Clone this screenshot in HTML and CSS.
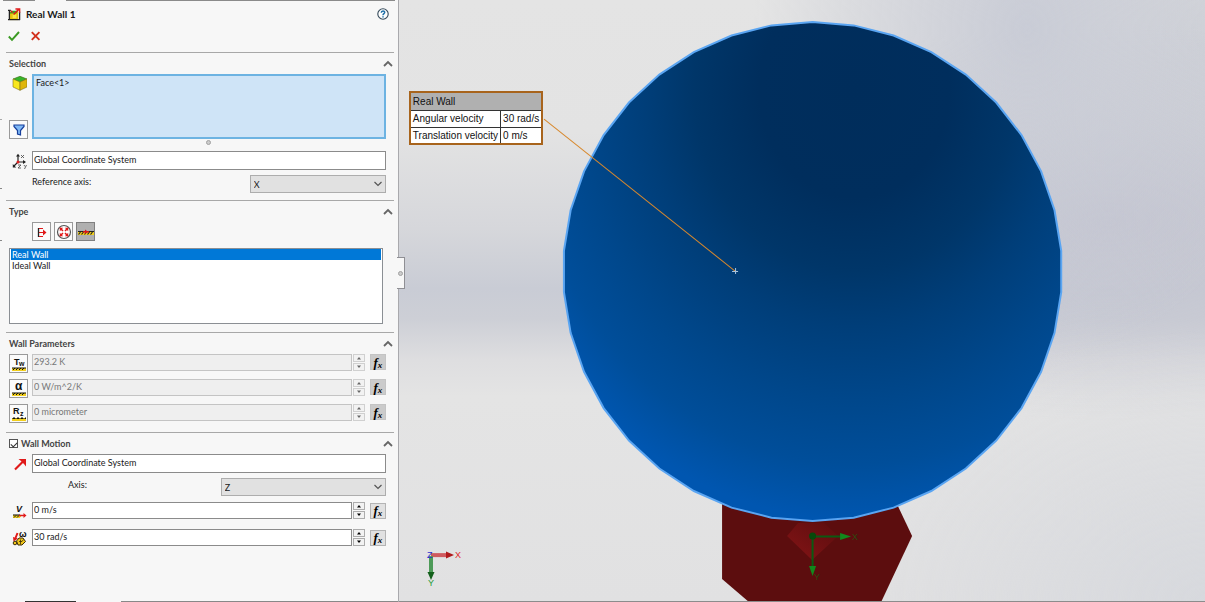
FILE: index.html
```html
<!DOCTYPE html>
<html lang="en">
<head>
  <meta charset="UTF-8" />
  <meta name="viewport" content="width=device-width, initial-scale=1.0"/>
  <title>Real Wall 1</title>
  <link rel="stylesheet" href="styles.css">
</head>
<body>

  <!-- shared symbols -->
  <svg class="symbols" aria-hidden="true">
    <symbol id="chevron-up" viewBox="0 0 10 8"><path d="M1 6 5 2 9 6" fill="none" stroke="#666" stroke-width="1.8"/></symbol>
    <symbol id="chevron-down" viewBox="0 0 10 8"><path d="M1.5 2 5 5.5 8.5 2" fill="none" stroke="#555" stroke-width="1.2"/></symbol>
    <symbol id="tri-up" viewBox="0 0 6 4"><path d="M1 3.5 3 1 5 3.5z" fill="currentColor"/></symbol>
    <symbol id="tri-down" viewBox="0 0 6 4"><path d="M1 .5 3 3 5 .5z" fill="currentColor"/></symbol>
    <symbol id="ground" viewBox="0 0 14 4">
      <rect y="1" width="14" height="3" fill="#f2cf1d"/>
      <path d="M0 1h14M1 3l2-2M4 3l2-2M7 3l2-2M10 3l2-2" stroke="#111" stroke-width="1" fill="none"/>
    </symbol>
  </svg>

  <div class="app">
    <aside class="panel">
      <header class="panel-header">
        <div class="title-row">
          <svg class="title-icon" viewBox="0 0 14 14">
            <path d="M2 4h9v9H2z" fill="#e6c60e"/>
            <path d="M2 5 4 3h7L9 6H2z" fill="#35a81f"/>
            <path d="M5 7h4v4H5z" fill="#f7e64a"/>
            <path d="M1.500 2v11M0 2.500h3M12.500 4v9M0 12.500h13" stroke="#222" stroke-width="1.400" fill="none"/>
            <path d="M6 7 12 1M8 1.200h4.500V5" stroke="#e01b1b" stroke-width="1.600" fill="none"/>
            <path d="M3 3l2 2" stroke="#e01b1b" stroke-width="1.400"/>
          </svg>
          <h1>Real Wall 1</h1>
          <button class="plain help" type="button" aria-label="Help">
            <svg viewBox="0 0 12 12">
              <circle cx="6" cy="6" r="5.200" fill="#fff" stroke="#34495a" stroke-width="1.100"/>
              <path d="M4.300 4.700C4.300 2.300 7.800 2.400 7.700 4.500 7.600 5.700 6 5.700 6 7.300M6 8.200v1.300" fill="none" stroke="#2070a8" stroke-width="1.500"/>
            </svg>
          </button>
        </div>
        <div class="action-row">
          <button class="plain" type="button" aria-label="OK">
            <svg viewBox="0 0 12 12"><path d="M.8 6.500 4 9.800 11 2" fill="none" stroke="#3a9a22" stroke-width="1.900"/></svg>
          </button>
          <button class="plain" type="button" aria-label="Cancel">
            <svg viewBox="0 0 12 12"><path d="M1.800 2.200 9.400 9.800M9.400 2.200 1.800 9.800" fill="none" stroke="#d2301c" stroke-width="1.900"/></svg>
          </button>
        </div>
      </header>

      <section class="group selection">
        <div class="group-head">
          <h2>Selection</h2>
          <button class="plain toggle" type="button" aria-label="Collapse Selection"><svg><use href="#chevron-up"/></svg></button>
        </div>
        <div class="row">
          <div class="side-icons">
            <svg class="icon" viewBox="0 0 16 16">
              <path d="M9 1.300 16 4 9 7 2 4z" fill="#35b52a" stroke="#3a6a10" stroke-width=".6"/>
              <path d="M2 4 9 7v8.300L2 12z" fill="#f8e71c" stroke="#80701a" stroke-width=".6"/>
              <path d="M16 4 9 7v8.300L16 12z" fill="#dfb60c" stroke="#80701a" stroke-width=".6"/>
            </svg>
            <button class="icon-btn" type="button" aria-label="Filter">
              <svg viewBox="0 0 16 16"><path d="M3 3h10v1.500L9.500 8.500V13l-3-1V8.500L3 4.500z" fill="#7fb8f5" stroke="#173f9c" stroke-width="1.200"/></svg>
            </button>
          </div>
          <div class="pick-area">
            <ul class="pick-list">
              <li>Face&lt;1&gt;</li>
            </ul>
            <span class="grip"></span>
          </div>
        </div>
        <div class="row">
          <svg class="icon" viewBox="0 0 16 16">
            <path d="M7 9V2M7 9h7M7 9l-4 4" fill="none" stroke="#222" stroke-width="1.200"/>
            <path d="M5 3.500 7 .8 9 3.500zM12 7l3 2-3 2zM1.800 11v3.500h3.400z" fill="#222"/>
            <path d="M10 2l3 3M13 2l-3 3M7 12h3l-3 3h3M13 12l1 1.500M15.500 12l-2 4" fill="none" stroke="#444" stroke-width=".8"/>
            <circle cx="7" cy="9" r="1.500" fill="#e02020"/>
          </svg>
          <input class="text" type="text" value="Global Coordinate System" aria-label="Coordinate system">
        </div>
        <div class="row pick-axis">
          <label for="ref-axis">Reference axis:</label>
          <span class="drop">
            <select id="ref-axis"><option>X</option><option>Y</option><option>Z</option></select>
            <svg><use href="#chevron-down"/></svg>
          </span>
        </div>
      </section>

      <section class="group">
        <div class="group-head">
          <h2>Type</h2>
          <button class="plain toggle" type="button" aria-label="Collapse Type"><svg><use href="#chevron-up"/></svg></button>
        </div>
        <div class="type-bar">
          <button class="icon-btn" type="button" aria-label="Flow openings">
            <svg viewBox="0 0 16 16">
              <path d="M4.500 4v9" stroke="#222" stroke-width="1.300" fill="none"/>
              <path d="M5 4.500h4M5 12.500h4M5 8.500h6" stroke="#e01818" stroke-width="1.200" fill="none"/>
              <path d="M9 5.500 12.500 8.500 9 11.500z" fill="#e01818"/>
            </svg>
          </button>
          <button class="icon-btn" type="button" aria-label="Pressure openings">
            <svg viewBox="0 0 16 16">
              <circle cx="8" cy="8" r="6.500" fill="#fff" stroke="#555" stroke-width="1.200"/>
              <path d="M3.800 7.200V3.800h3.400zM12.200 7.200V3.800H8.800zM3.800 8.800v3.400h3.400zM12.200 8.800v3.400H8.800z" fill="#e01818"/>
              <path d="M4 4l3 3M12 4 9 7M4 12l3-3M12 12 9 9" stroke="#e01818" stroke-width="1.500"/>
            </svg>
          </button>
          <button class="icon-btn active" type="button" aria-label="Wall">
            <svg viewBox="0 0 16 16">
              <rect x="0" y="8" width="16" height="3" fill="#f2cf1d"/>
              <path d="M0 7.500h16M.5 10.500l2-2.500M3.500 10.500l2-2.500M6.500 10.500l2-2.500M9.500 10.500l2-2.500M12.500 10.500l2-2.500" stroke="#222" stroke-width="1.200"/>
              <path d="M5 7.800h6" stroke="#d81818" stroke-width="1.500"/>
              <path d="M7 5.500l3 2.300L7 10z" fill="#d81818"/>
            </svg>
          </button>
        </div>
        <ul class="type-list" role="listbox" aria-label="Wall type">
          <li class="selected" role="option" aria-selected="true">Real Wall</li>
          <li role="option" aria-selected="false">Ideal Wall</li>
        </ul>
      </section>

      <section class="group params">
        <div class="group-head">
          <h2>Wall Parameters</h2>
          <button class="plain toggle" type="button" aria-label="Collapse Wall Parameters"><svg><use href="#chevron-up"/></svg></button>
        </div>
        <div class="row">
          <button class="icon-btn" type="button" aria-label="Wall temperature">
            <svg viewBox="0 0 16 16">
              <text x="3" y="9" class="glyph">T</text><text x="8" y="10" class="glyph sub">w</text>
              <use href="#ground" x="1" y="11" width="14" height="4"/>
            </svg>
          </button>
          <input class="text" type="text" value="293.2 K" aria-label="Temperature" disabled>
          <span class="spin disabled">
            <button type="button" aria-label="Increase" disabled><svg><use href="#tri-up"/></svg></button>
            <button type="button" aria-label="Decrease" disabled><svg><use href="#tri-down"/></svg></button>
          </span>
          <button class="fx" type="button">f<sub>x</sub></button>
        </div>
        <div class="row">
          <button class="icon-btn" type="button" aria-label="Heat transfer coefficient">
            <svg viewBox="0 0 16 16">
              <text x="4" y="9" class="glyph alpha">α</text>
              <use href="#ground" x="1" y="11" width="14" height="4"/>
            </svg>
          </button>
          <input class="text" type="text" value="0 W/m^2/K" aria-label="Heat transfer" disabled>
          <span class="spin disabled">
            <button type="button" aria-label="Increase" disabled><svg><use href="#tri-up"/></svg></button>
            <button type="button" aria-label="Decrease" disabled><svg><use href="#tri-down"/></svg></button>
          </span>
          <button class="fx" type="button">f<sub>x</sub></button>
        </div>
        <div class="row">
          <button class="icon-btn" type="button" aria-label="Roughness">
            <svg viewBox="0 0 16 16">
              <text x="2" y="8" class="glyph">R</text><text x="9" y="10" class="glyph sub">z</text>
              <rect x="1" y="12" width="14" height="3" fill="#f2cf1d"/>
              <path d="M1 13l2-2 2 2 2-2 2 2 2-2 2 2 2-2v2z" fill="#111"/>
            </svg>
          </button>
          <input class="text" type="text" value="0 micrometer" aria-label="Roughness" disabled>
          <span class="spin disabled">
            <button type="button" aria-label="Increase" disabled><svg><use href="#tri-up"/></svg></button>
            <button type="button" aria-label="Decrease" disabled><svg><use href="#tri-down"/></svg></button>
          </span>
          <button class="fx" type="button">f<sub>x</sub></button>
        </div>
      </section>

      <section class="group motion">
        <div class="group-head">
          <span class="check">
            <input type="checkbox" id="wall-motion" checked>
            <label for="wall-motion">Wall Motion</label>
          </span>
          <button class="plain toggle" type="button" aria-label="Collapse Wall Motion"><svg><use href="#chevron-up"/></svg></button>
        </div>
        <div class="row">
          <svg class="icon" viewBox="0 0 16 16">
            <path d="M4 13.500 12 5.500" stroke="#e01a1a" stroke-width="2.200"/>
            <path d="M7.500 3H15v7.500l-2-2.500-3-3z" fill="#e01a1a"/>
          </svg>
          <input class="text" type="text" value="Global Coordinate System" aria-label="Motion coordinate system">
        </div>
        <div class="row pick-axis wide">
          <label for="axis">Axis:</label>
          <span class="drop">
            <select id="axis"><option>Z</option><option>X</option><option>Y</option></select>
            <svg><use href="#chevron-down"/></svg>
          </span>
        </div>
        <div class="row value-row">
          <svg class="icon" viewBox="0 0 16 16">
            <text x="5" y="9" class="glyph slanted">V</text>
            <use href="#ground" x="2" y="11" width="8" height="4" preserveAspectRatio="none"/>
            <rect x="2" y="12" width="7" height="3" fill="#f2cf1d"/>
            <path d="M2 12h7M3 14.500l2-2M6 14.500l2-2" stroke="#111"/>
            <path d="M8 12.500h5" stroke="#e01a1a" stroke-width="1.500"/>
            <path d="M12.500 10l3 2.500-3 2.500z" fill="#e01a1a"/>
          </svg>
          <input class="text" type="text" value="0 m/s" aria-label="Translation velocity">
          <span class="spin">
            <button type="button" aria-label="Increase"><svg><use href="#tri-up"/></svg></button>
            <button type="button" aria-label="Decrease"><svg><use href="#tri-down"/></svg></button>
          </span>
          <button class="fx light" type="button">f<sub>x</sub></button>
        </div>
        <div class="row value-row">
          <svg class="icon" viewBox="0 0 16 16">
            <path d="M5.500 11 8 8h4l2.500 3.500L11 15H7z" fill="#f0c61a" stroke="#3a2c08"/>
            <path d="M8 11.500h3l1.500-2M9.500 9.500v5" stroke="#3a2c08" fill="none" stroke-width=".8"/>
            <path d="M6.500 3 4.500 8" fill="none" stroke="#e01a1a" stroke-width="2"/>
            <path d="M2 7l5 1.500-4.500 3z" fill="#e01a1a"/>
            <circle cx="4" cy="13" r="1.800" fill="#f0c61a" stroke="#3a2c08"/>
            <text x="8" y="7" class="glyph omega">ω</text>
          </svg>
          <input class="text" type="text" value="30 rad/s" aria-label="Angular velocity">
          <span class="spin">
            <button type="button" aria-label="Increase"><svg><use href="#tri-up"/></svg></button>
            <button type="button" aria-label="Decrease"><svg><use href="#tri-down"/></svg></button>
          </span>
          <button class="fx light" type="button">f<sub>x</sub></button>
        </div>
      </section>

      <button class="splitter" type="button" aria-label="Hide panel"><span class="grip"></span></button>
    </aside>

    <main class="viewport">
      <svg class="scene" viewBox="0 0 806 601" preserveAspectRatio="xMinYMin slice">
        <defs>
          <radialGradient id="face" gradientUnits="userSpaceOnUse" cx="0" cy="0" r="1" gradientTransform="translate(455 90) scale(380 430)">
            <stop offset="0" stop-color="#002d5b"/>
            <stop offset=".25" stop-color="#002e5d"/>
            <stop offset=".42" stop-color="#003669"/>
            <stop offset=".55" stop-color="#003e79"/>
            <stop offset=".72" stop-color="#00478b"/>
            <stop offset=".87" stop-color="#004e9a"/>
            <stop offset="1" stop-color="#0056b0"/>
          </radialGradient>
          <linearGradient id="cone" x1="0" y1="1" x2="1" y2="0">
            <stop offset="0" stop-color="#851416"/>
            <stop offset="1" stop-color="#5c0d0e"/>
          </linearGradient>
        </defs>

        <!-- hub -->
        <path d="M323 500V579L350 602H482L513 536 496 500z" fill="#5c0d0e"/>
        <path d="M388 536 399 523H425L439 536 413 560z" fill="url(#cone)"/>

        <!-- disc face -->
        <polygon class="disc" fill="url(#face)" points="413.500,22 454.600,25.400 494.500,35.500 532.200,52.100 566.700,74.600 597.100,102.500 622.400,135 642,171.300 655.400,210.200 662.100,250.900 662.100,292.100 655.400,332.800 642,371.700 622.400,408 597.100,440.500 566.700,468.400 532.200,490.900 494.500,507.500 454.600,517.600 413.500,521 372.400,517.600 332.500,507.500 294.800,490.900 260.300,468.400 229.900,440.500 204.600,408 185,371.700 171.600,332.800 164.900,292.100 164.900,250.900 171.600,210.200 185,171.300 204.600,135 229.900,102.500 260.300,74.600 294.800,52.100 332.500,35.500 372.400,25.400"/>

        <!-- leader line -->
        <path d="M145 119 336 271" stroke="#d8882c" fill="none"/>
        <path d="M333 271.500h6M336.500 268v6" stroke="#a9c4de" fill="none"/>

        <!-- local axes -->
        <path d="M413 536.500h30M413.500 536v32" stroke="#0b5a12" stroke-width="2" fill="none"/>
        <path d="M441 533l11 3.500-11 3.500zM410 566h7l-3.500 10z" fill="#12891d"/>
        <circle cx="413.500" cy="536" r="3.500" fill="#064a0b"/>
        <text x="453" y="540" class="axis-label faint">X</text>
        <text x="415" y="580" class="axis-label faint">Y</text>

        <!-- view triad -->
        <path d="M32 555h16" stroke="#cf5a5f" stroke-width="4"/>
        <path d="M47 551.500 55 555l-8 3.500z" fill="#b01a1c"/>
        <path d="M32 556v17" stroke="#4d9a58" stroke-width="4"/>
        <path d="M28.500 572h7L32 580z" fill="#14601c"/>
        <text x="28" y="558" class="axis-label z">Z</text>
        <text x="56" y="558" class="axis-label x">X</text>
        <text x="29" y="586" class="axis-label y">Y</text>
      </svg>

      <table class="callout">
        <thead>
          <tr><th colspan="2">Real Wall</th></tr>
        </thead>
        <tbody>
          <tr><td>Angular velocity</td><td>30 rad/s</td></tr>
          <tr><td>Translation velocity</td><td>0 m/s</td></tr>
        </tbody>
      </table>
    </main>
  </div>

</body>
</html>
```
FILE: styles.css
```css
* {
  box-sizing: border-box;
}
body {
  margin: 0;
  font-family: Lato, "Noto Sans", sans-serif;
  font-size: 9px;
  line-height: 11px;
  color: #1a1a1a;
}
h1, h2, ul {
  margin: 0;
  padding: 0;
}
ul {
  list-style: none;
}
button, input, select {
  margin: 0;
  padding: 0;
  font: inherit;
  color: inherit;
}
svg {
  display: block;
}
.symbols {
  position: absolute;
  width: 0;
  height: 0;
}

.app {
  display: flex;
  min-height: 100vh;
}

/* --- property panel --- */
.panel {
  position: relative;
  z-index: 1;
  flex: 0 0 33.1%;
  min-width: 320px;
  padding: 0 4px 0 6px;
  border-right: 1px solid #a9a9ad;
  background:
    linear-gradient(#8a8a8a, #8a8a8a) 3px 0 / 32px 1px no-repeat,
    linear-gradient(#8a8a8a, #8a8a8a) 66px 0 / 329px 1px no-repeat,
    linear-gradient(#aaa, #aaa) 0 119px / 2px 1px no-repeat,
    linear-gradient(#888, #888) 0 188px / 2px 1px no-repeat,
    linear-gradient(#888, #888) 0 240px / 2px 1px no-repeat,
    linear-gradient(#333, #333) 25px 100% / 51px 1px no-repeat,
    linear-gradient(to right, transparent 121px, #888 121px) 0 100% / 100% 1px no-repeat,
    #f7f7f7;
}
.plain {
  border: 0;
  background: none;
}
.plain svg {
  width: 12px;
  height: 12px;
}
.panel-header {
  height: 52px;
  padding: 6px 5px 0 2px;
}
.title-row {
  display: flex;
  align-items: center;
  gap: 5px;
  height: 16px;
}
.title-icon {
  width: 13px;
  height: 13px;
}
.title-row h1 {
  flex: 1;
  font-size: 10px;
  line-height: 16px;
}
.action-row {
  display: flex;
  gap: 10px;
  padding-top: 8px;
}

/* --- groups --- */
.group {
  padding-bottom: 8px;
  border-top: 1px solid #a8a8a8;
}
.selection {
  padding-bottom: 7px;
}
.group-head {
  display: flex;
  align-items: center;
  justify-content: space-between;
  height: 21px;
  padding: 0 1px 0 3px;
}
.group-head h2,
.check label {
  font-size: 9px;
  line-height: 11px;
  font-weight: bold;
  color: #444;
}
.toggle svg {
  width: 10px;
  height: 8px;
}
.row {
  display: flex;
  align-items: center;
  padding: 0 8px 0 26px;
}
.row > .icon,
.row > .icon-btn {
  flex: none;
}
.row > .icon {
  margin: 0 5px 0 -21px;
}
.row > .icon-btn {
  margin: 0 4px 0 -23px;
}
.icon {
  width: 16px;
  height: 16px;
}
.icon-btn {
  display: grid;
  place-items: center;
  width: 19px;
  height: 19px;
  border: 1px solid #9a9a9a;
  background: #fbfbfb;
}
.icon-btn svg {
  width: 16px;
  height: 16px;
}
.icon-btn.active {
  border-color: #808080;
  background: #b0b0b0;
}

/* --- selection --- */
.side-icons {
  display: flex;
  flex-direction: column;
  align-items: center;
  align-self: stretch;
  justify-content: space-between;
  width: 19px;
  margin: 1px 4px 12px -23px;
}
.pick-area {
  flex: 1;
}
.pick-list {
  height: 65px;
  padding: 1px 2px;
  border: 2px solid #6db3e2;
  background: #cfe4f7;
}
.grip {
  display: block;
  width: 5px;
  height: 5px;
  border: 1px solid #a2a2a2;
  border-radius: 50%;
  background: #ccc;
}
.pick-area .grip {
  margin: 1px auto 6px;
}
.text {
  flex: 1;
  min-width: 0;
  height: 19px;
  padding: 0 2px 3px 1px;
  border: 1px solid #8b8b8b;
  background: #fff;
}
.pick-axis {
  justify-content: space-between;
  align-items: flex-start;
  padding-top: 5px;
}
.drop {
  position: relative;
  width: 136px;
}
.drop select {
  display: block;
  width: 100%;
  height: 18px;
  padding: 0 3px;
  border: 1px solid #adadad;
  border-radius: 0;
  background: #e1e1e1;
  appearance: none;
}
.drop svg {
  position: absolute;
  top: 5px;
  right: 3px;
  width: 10px;
  height: 8px;
  pointer-events: none;
}

/* --- type --- */
.type-bar {
  display: flex;
  gap: 3px;
  padding-left: 26px;
}
.type-list {
  height: 76px;
  margin: 7px 11px 0 3px;
  padding: 0 1px;
  border: 1px solid #8b8f94;
  background: #fff;
}
.type-list li {
  padding: 0 1px;
}
.type-list .selected {
  background: #0078d7;
  color: #fff;
}

/* --- numeric fields --- */
.params {
  padding-bottom: 9px;
}
.params .row {
  align-items: flex-start;
}
.params .row + .row {
  margin-top: 6px;
}
.params .text,
.value-row .text {
  height: 17px;
}
.text:disabled {
  border-color: #c4c4c4;
  background: #efefef;
  color: #777;
}
.spin {
  display: flex;
  flex-direction: column;
  gap: 1px;
  width: 12px;
  margin: 0 5px 0 1px;
}
.spin button {
  display: grid;
  place-items: center;
  height: 8px;
  border: 1px solid #acacac;
  background: #f2f2f2;
  color: #000;
}
.spin svg {
  width: 6px;
  height: 4px;
}
.spin.disabled button {
  border-color: #d0d0d0;
  color: #666;
}
.fx {
  width: 16px;
  height: 16px;
  border: 1px solid #c4c4c4;
  background: #cbcbcb;
  color: #000;
  font-family: "Liberation Serif", serif;
  font-size: 13px;
  line-height: 13px;
  font-weight: bold;
  font-style: italic;
}
.fx sub {
  font-size: 9px;
  line-height: 0;
  vertical-align: -1px;
}
.fx.light {
  border-color: #b4b4b4;
  background: #e1e1e1;
}

/* --- wall motion --- */
.check {
  display: flex;
  align-items: center;
  gap: 3px;
}
.check input {
  display: grid;
  place-items: center;
  width: 9px;
  height: 9px;
  border: 1px solid #555;
  background: #fff;
  appearance: none;
}
.check input:checked::before {
  content: "";
  width: 5px;
  height: 3px;
  border: solid #333;
  border-width: 0 0 1px 1px;
  transform: rotate(-45deg);
}
.wide {
  padding-left: 62px;
}
.wide .drop {
  width: 165px;
}
.pick-axis label {
  line-height: 13px;
}
.value-row {
  margin-top: 6px;
}
.value-row + .value-row {
  margin-top: 10px;
}

/* --- splitter handle over the panel edge --- */
.splitter {
  position: absolute;
  top: 257px;
  right: -7px;
  display: grid;
  place-items: center;
  width: 8px;
  height: 32px;
  border: 1px solid #8f8f94;
  border-left: 0;
  background: #f7f7f7;
}

/* --- glyphs inside icons --- */
.glyph {
  font: bold 9px "Liberation Sans", sans-serif;
  fill: #111;
}
.glyph.sub {
  font-size: 7px;
}
.glyph.alpha {
  font-size: 12px;
}
.glyph.slanted {
  font-style: italic;
}

/* --- 3D view --- */
.viewport {
  position: relative;
  flex: 1;
  overflow: hidden;
  border-bottom: 1px solid #8c8c8c;
  background:
    radial-gradient(ellipse 45% 45% at 100% 100%, rgba(214, 216, 221, 0.9), rgba(220, 221, 224, 0)),
    radial-gradient(ellipse 34% 55% at 78% 5%, #c9ccd6, rgba(205, 208, 216, 0)),
    radial-gradient(ellipse 60% 33% at 88% 37%, #c3c4d0 0%, rgba(196, 198, 209, 0.7) 40%, rgba(200, 203, 213, 0) 100%),
    radial-gradient(ellipse 30% 40% at 100% 8%, #d0d2d7, rgba(212, 213, 216, 0)),
    linear-gradient(#e4e4e4 0%, #e3e3e3 22%, #d6d7db 38%, #c9ccd5 48%, #cdcfd6 53%, #dedee0 60%, #e4e4e4 66%, #e1e1e2 100%);
}
.scene {
  position: absolute;
  inset: 0;
  width: 100%;
  height: 100%;
}
.disc {
  stroke: #5aa5f2;
  stroke-width: 2;
}
.axis-label {
  font: 9px "Liberation Sans", sans-serif;
}
.faint {
  fill: #2d4a10;
}
.x {
  fill: #e02a2a;
}
.y {
  fill: #1f9a35;
}
.z {
  fill: #2a2ad0;
}

.callout {
  position: absolute;
  top: 91px;
  left: 10px;
  border: 2px solid #a8641c;
  border-collapse: collapse;
  background: #fff;
  font: 10px "Liberation Sans", sans-serif;
  color: #111;
  white-space: nowrap;
}
.callout th,
.callout td {
  height: 17px;
  padding: 0 2px;
  border: 1px solid #333;
  font-weight: normal;
  text-align: left;
}
.callout th {
  height: 18px;
  background: #b0b0b0;
}
```
